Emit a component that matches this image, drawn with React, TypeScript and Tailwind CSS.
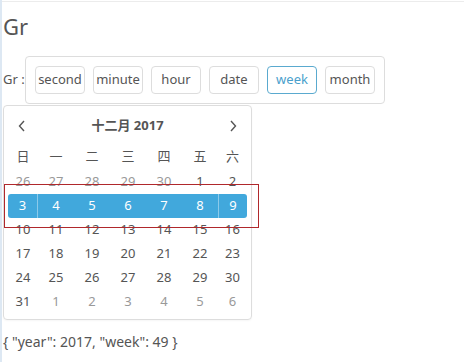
import React from 'react'

const MODES = ['second', 'minute', 'hour', 'date', 'week', 'month']
const WEEKDAYS = ['日', '一', '二', '三', '四', '五', '六']

// [day, inMonth]
const ROWS: [number, boolean][][] = [
  [[26, false], [27, false], [28, false], [29, false], [30, false], [1, true], [2, true]],
  [[3, true], [4, true], [5, true], [6, true], [7, true], [8, true], [9, true]],
  [[10, true], [11, true], [12, true], [13, true], [14, true], [15, true], [16, true]],
  [[17, true], [18, true], [19, true], [20, true], [21, true], [22, true], [23, true]],
  [[24, true], [25, true], [26, true], [27, true], [28, true], [29, true], [30, true]],
  [[31, true], [1, false], [2, false], [3, false], [4, false], [5, false], [6, false]],
]
const SELECTED = 1
const GRID = 'grid grid-cols-[30px_repeat(5,minmax(0,1fr))_29px]'

function Chevron({ dir }: { dir: 'left' | 'right' }) {
  return (
    <svg width="8" height="12" viewBox="0 0 8 12" fill="none" stroke="#555" strokeWidth="1.4">
      {dir === 'left' ? <path d="M6 1 L1.5 6 L6 11" /> : <path d="M2 1 L6.5 6 L2 11" />}
    </svg>
  )
}

export default function App() {
  return (
    <div
      className="relative min-h-[362px] w-[464px] bg-white border-l-2 border-[#dde8f3] text-[#555]"
      style={{ fontFamily: '"Noto Sans", "Noto Sans CJK SC", sans-serif' }}
    >
      <div className="h-[2px] border-b border-[#ececec]" />
      <div className="pl-[1px]">
        <h1 className="text-[22px] leading-[28px] mt-[10px] h-[28px]">Gr</h1>

        <div className="flex items-center mt-[16px]">
          <span className="text-[13px] w-[22px] whitespace-nowrap">Gr :</span>
          <div className="flex gap-[8px] border border-[#ddd] rounded-[4px] p-[9px]">
            {MODES.map(m => (
              <button
                key={m}
                className={
                  m === 'week'
                    ? 'w-[50px] h-[28px] rounded-[4px] border border-[#5aaacf] text-[13px] text-[#4a9fcc] bg-white'
                    : 'w-[50px] h-[28px] rounded-[4px] border border-[#ddd] text-[13px] text-[#555] bg-white'
                }
              >
                {m}
              </button>
            ))}
          </div>
        </div>

        <div className="mt-[1px] w-[249px] border border-[#ddd] rounded-[4px] px-[4px] pt-[7px] pb-[5px] shadow-[0_1px_2px_rgba(0,0,0,0.04)]">
          <div className="flex items-center justify-between h-[26px] mb-[5px] px-[10px]">
            <Chevron dir="left" />
            <span className="text-[13px] font-bold">十二月 2017</span>
            <Chevron dir="right" />
          </div>
          <div className={`${GRID} h-[26px] items-center text-[13px] text-center`}>
            {WEEKDAYS.map(w => <span key={w}>{w}</span>)}
          </div>
          {ROWS.map((row, r) => (
            <div
              key={r}
              className={
                r === SELECTED
                  ? `${GRID} h-[24px] items-center text-[13px] text-center bg-[#41a8dc] text-white rounded-[3px]`
                  : `${GRID} h-[24px] items-center text-[13px] text-center`
              }
            >
              {row.map(([d, inMonth], c) => (
                <span
                  key={c}
                  className={
                    r === SELECTED
                      ? c === 0
                        ? 'h-full flex items-center justify-center border-r border-[#8ccaea]'
                        : c === 6
                          ? 'h-full flex items-center justify-center border-l border-[#8ccaea]'
                          : 'h-full flex items-center justify-center'
                      : inMonth
                        ? 'text-[#555]'
                        : 'text-[#999]'
                  }
                >
                  {d}
                </span>
              ))}
            </div>
          ))}
        </div>

        <p className="text-[14px] mt-[11px]">{'{ "year": 2017, "week": 49 }'}</p>
      </div>

      <div className="absolute left-[2px] top-[184px] w-[255px] h-[44px] border border-[#b0282c]" />
    </div>
  )
}
